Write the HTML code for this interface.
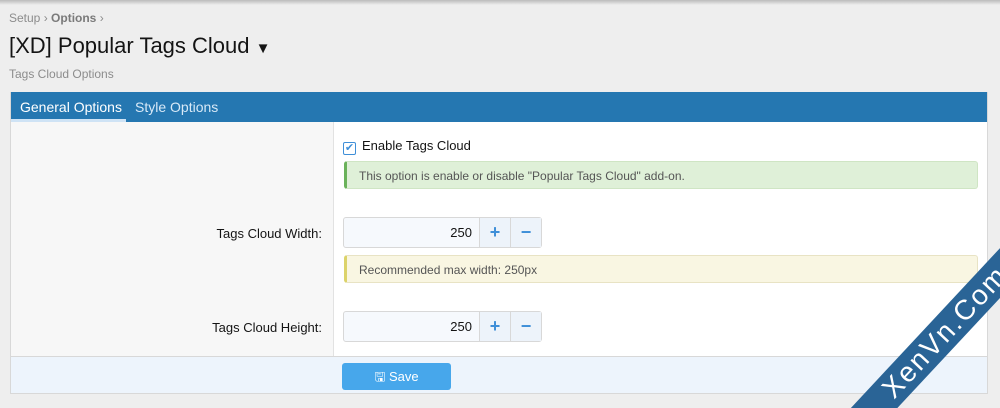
<!DOCTYPE html>
<html style="width:1000px;height:408px;overflow:hidden"><head><style>
*{box-sizing:border-box;margin:0;padding:0}
body{width:1000px;height:408px;overflow:hidden;background:#eeeeee;font-family:"Liberation Sans",Arial,sans-serif;color:#141414;position:relative}
.topsh{position:absolute;left:0;top:0;width:1000px;height:5px;background:linear-gradient(#bbb,#eee)}
.crumb{position:absolute;left:9px;top:11px;font-size:12px;color:#8c8c8c}
.crumb b{color:#7a7a7a}
h1{position:absolute;left:9px;top:33px;font-size:22px;font-weight:normal;color:#141414}
.sub{position:absolute;left:9px;top:67px;font-size:12px;color:#8c8c8c}
.panel{position:absolute;left:10px;top:92px;width:978px;height:302px;background:#fff;border:1px solid #d8d8d8;border-top:none}
.tabs{height:30px;background:#2577b1;position:relative}
.tab{position:absolute;top:7px;font-size:14px;color:#fff}
.act{position:absolute;left:0;top:0;width:115px;height:30px;border-bottom:3px solid #cfe3f5}
.leftcol{position:absolute;left:0;top:30px;width:323px;height:234px;background:#f7f7f7;border-right:1px solid #e2e2e2}
.lbl{position:absolute;right:665px;font-size:13px;color:#141414}
.inp{position:absolute;left:332px;width:199px;height:31px;border:1px solid #d8d8d8;border-radius:3px;background:#f6f9fd;display:flex}
.inp .v{flex:1;text-align:right;padding-right:7px;line-height:29px;font-size:13px}
.inp .b{width:31px;border-left:1px solid #d8d8d8;background:#edf3fa;color:#3f8fd8;font-weight:bold;text-align:center;line-height:28px;font-size:18px}
.hint{position:absolute;left:333px;width:634px;height:28px;border-radius:3px;font-size:12px;line-height:28px;padding-left:12px;color:#555}
.foot{position:absolute;left:0;top:264px;width:976px;height:37px;background:#edf4fc;border-top:1px solid #d8d8d8}
.save{position:absolute;left:331px;top:6px;width:109px;height:27px;background:#47a7eb;border-radius:3px;color:#fff;font-size:13px;line-height:27px;text-align:center}
.clip{position:absolute;left:0;top:0;width:1000px;height:408px;overflow:hidden}
.wm{position:absolute;left:800px;top:315px;width:290px;height:34px;background:#2a6496;transform:rotate(-47deg);color:#fff;font-size:28px;line-height:34px;text-align:center;letter-spacing:2px;transform-origin:50% 50%;}
</style></head><body>
<div class="topsh"></div>
<div class="crumb">Setup › <b>Options</b> ›</div>
<h1>[XD] Popular Tags Cloud <span style="font-size:15px">▼</span></h1>
<div class="sub">Tags Cloud Options</div>
<div class="panel">
 <div class="tabs"><div class="act"></div><div class="tab" style="left:9px">General Options</div><div class="tab" style="left:124px;color:#d8e9f7">Style Options</div></div>
 <div class="leftcol"></div>
 <div style="position:absolute;left:332px;top:46px;font-size:13px;color:#141414"><span style="display:inline-block;width:13px;height:13px;border:1px solid #3f8fd8;border-radius:2px;color:#3f8fd8;font-size:11px;line-height:11px;text-align:center;vertical-align:-1px;margin-right:6px">✔</span>Enable Tags Cloud</div>
 <div class="hint" style="top:69px;background:#dff0d8;border:1px solid #cfe5c4;border-left:3px solid #6ab25a">This option is enable or disable "Popular Tags Cloud" add-on.</div>
 <div class="lbl" style="top:134px">Tags Cloud Width:</div>
 <div class="inp" style="top:125px"><div class="v">250</div><div class="b">+</div><div class="b">−</div></div>
 <div class="hint" style="top:163px;background:#f9f6e2;border:1px solid #e8e3c4;border-left:3px solid #dcd36a">Recommended max width: 250px</div>
 <div class="lbl" style="top:228px">Tags Cloud Height:</div>
 <div class="inp" style="top:219px"><div class="v">250</div><div class="b">+</div><div class="b">−</div></div>
 <div class="foot"><div class="save">🖫 Save</div></div>
</div>
<div class="clip"><div class="wm">XenVn.Com</div></div>
</body></html>
